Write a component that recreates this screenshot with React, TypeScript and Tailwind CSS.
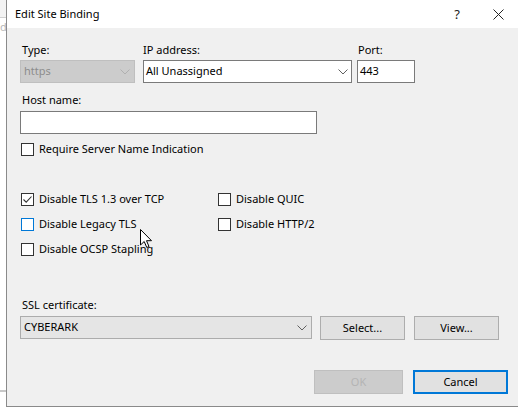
import React from "react";

const font = { fontFamily: '"Noto Sans", "Segoe UI", sans-serif' };

function Chevron({ color = "#606060" }: { color?: string }) {
  return (
    <svg width="10" height="6" viewBox="0 0 10 6" className="shrink-0">
      <path d="M0.5 0.5 L5 5 L9.5 0.5" fill="none" stroke={color} strokeWidth="1" />
    </svg>
  );
}

function Check({ checked = false, hover = false, label }: { checked?: boolean; hover?: boolean; label: string }) {
  return (
    <div className="flex items-center h-[16px]">
      <div
        className={
          "w-[13px] h-[13px] border flex items-center justify-center bg-white " +
          (hover ? "border-[#0078d7]" : "border-[#333333]")
        }
      >
        {checked && (
          <svg width="11" height="11" viewBox="0 0 11 11">
            <path d="M1.5 5.5 L4.2 8.2 L9.5 2.5" fill="none" stroke="#333" strokeWidth="1.1" />
          </svg>
        )}
      </div>
      <span className="ml-[5px] text-[11px] text-black leading-[16px]">{label}</span>
    </div>
  );
}

export default function App() {
  return (
    <div className="w-[518px] h-[410px] flex bg-white overflow-hidden relative" style={font}>
      {/* background strip */}
      <div className="w-[6px] h-full flex flex-col bg-white">
        <div className="h-[17px] bg-[#f3f3f3]" />
        <div className="h-px bg-[#d0d0d0]" />
        <div className="h-[18px] text-[11px] text-[#b8b8b8] leading-[18px] overflow-hidden">di</div>
        <div className="flex-1" />
        <div className="h-[2px] bg-[#c8c8c8] mb-[18px]" />
      </div>
      {/* dialog */}
      <div className="w-[512px] h-[407px] border-l border-b border-[#8a8a8a] flex flex-col bg-[#f0f0f0]">
        <div className="h-[28px] bg-white flex items-center pl-[8px] shrink-0">
          <span className="text-[11px] text-black flex-1">Edit Site Binding</span>
          <span className="text-[13px] text-[#222] mr-[33px] leading-none">?</span>
          <svg width="11" height="11" viewBox="0 0 11 11" className="mr-[14px]">
            <path d="M0.5 0.5 L10.5 10.5 M10.5 0.5 L0.5 10.5" stroke="#222" strokeWidth="1" />
          </svg>
        </div>
        <div className="flex-1 flex flex-col pl-[13px] pt-[14px]">
          {/* row 1 */}
          <div className="flex">
            <div className="flex flex-col w-[115px]">
              <span className="text-[11px] leading-[16px] pl-[2px] text-black">Type:</span>
              <div className="mt-[2px] h-[23px] bg-[#cccccc] border border-[#bfbfbf] flex items-center pl-[3px] pr-[4px]">
                <span className="flex-1 text-[11px] text-[#8c8c8c]">https</span>
                <Chevron color="#b0b0b0" />
              </div>
            </div>
            <div className="flex flex-col w-[209px] ml-[8px]">
              <span className="text-[11px] leading-[16px] text-black">IP address:</span>
              <div className="mt-[2px] h-[23px] bg-white border border-[#7a7a7a] flex items-center pl-[2px] pr-[3px]">
                <span className="flex-1 text-[11px] text-black">All Unassigned</span>
                <Chevron />
              </div>
            </div>
            <div className="flex flex-col w-[58px] ml-[5px]">
              <span className="text-[11px] leading-[16px] pl-[1px] text-black">Port:</span>
              <div className="mt-[2px] h-[23px] bg-white border border-[#7a7a7a] flex items-center pl-[2px]">
                <span className="text-[11px] text-black">443</span>
              </div>
            </div>
          </div>
          {/* host */}
          <span className="mt-[9px] text-[11px] leading-[16px] pl-[2px] text-black">Host name:</span>
          <div className="mt-[3px] w-[297px] h-[23px] bg-white border border-[#7a7a7a]" />
          <div className="mt-[7px] pl-[1px]">
            <Check label="Require Server Name Indication" />
          </div>
          {/* tls options */}
          <div className="mt-[34px] pl-[1px] flex">
            <div className="flex flex-col gap-[9px] w-[197px]">
              <Check checked label="Disable TLS 1.3 over TCP" />
              <Check hover label="Disable Legacy TLS" />
              <Check label="Disable OCSP Stapling" />
            </div>
            <div className="flex flex-col gap-[9px]">
              <Check label="Disable QUIC" />
              <Check label="Disable HTTP/2" />
            </div>
          </div>
          {/* ssl */}
          <span className="mt-[40px] text-[11px] leading-[16px] pl-[2px] text-black">SSL certificate:</span>
          <div className="mt-[3px] flex">
            <div className="w-[292px] h-[23px] bg-[#e5e5e5] border border-[#acacac] flex items-center pl-[3px] pr-[4px]">
              <span className="flex-1 text-[11px] text-black">CYBERARK</span>
              <Chevron />
            </div>
            <div className="ml-[8px] w-[85px] h-[24px] bg-[#e1e1e1] border border-[#adadad] flex items-center justify-center text-[11px] text-black">
              Select...
            </div>
            <div className="ml-[9px] w-[85px] h-[24px] bg-[#e1e1e1] border border-[#adadad] flex items-center justify-center text-[11px] text-black">
              View...
            </div>
          </div>
          {/* buttons */}
          <div className="mt-[30px] flex justify-end pr-[10px]">
            <div className="w-[89px] h-[24px] bg-[#cccccc] border border-[#bfbfbf] flex items-center justify-center text-[11px] text-[#b4b4b4]">
              OK
            </div>
            <div className="ml-[10px] w-[95px] h-[24px] bg-[#e1e1e1] border-2 border-[#0078d7] flex items-center justify-center text-[11px] text-black">
              Cancel
            </div>
          </div>
        </div>
      </div>
      {/* mouse cursor */}
      <svg className="absolute left-[140px] top-[229px]" width="13" height="20" viewBox="0 0 13 20">
        <path d="M0.5 0.5 L0.5 16 L4.2 12.5 L6.8 18.5 L9 17.5 L6.5 11.7 L11.5 11.7 Z" fill="white" stroke="black" strokeWidth="1" strokeLinejoin="round" />
      </svg>
    </div>
  );
}
